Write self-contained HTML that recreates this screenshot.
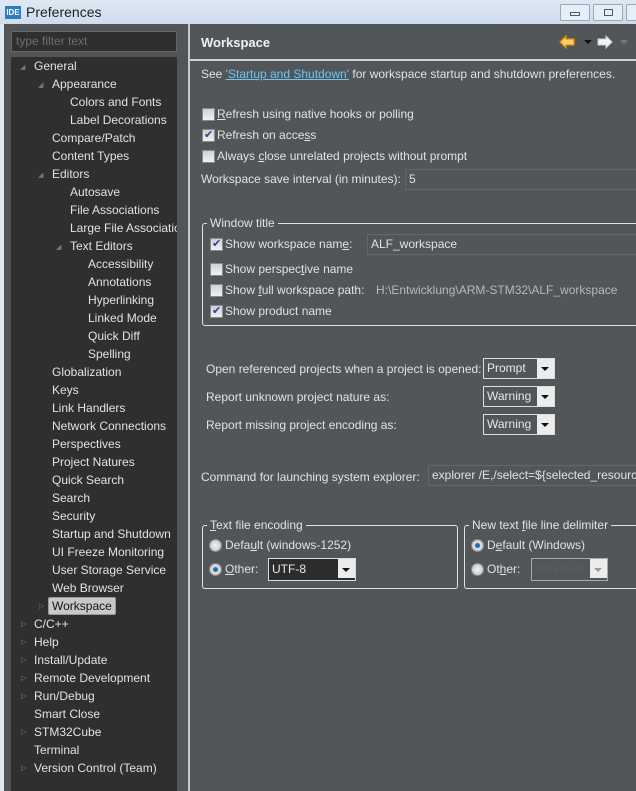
<!DOCTYPE html>
<html><head><meta charset="utf-8"><style>
*{margin:0;padding:0;box-sizing:border-box}
body{width:636px;height:791px;overflow:hidden;background:#dde8f4;font-family:"Liberation Sans",sans-serif;font-size:12px;color:#e2e2e2;position:relative}
.a{position:absolute;white-space:nowrap}
.tb{left:0;top:0;width:636px;height:24px;background:linear-gradient(#dfe9f5,#cfdcec)}
.left{left:4px;top:24px;width:184px;height:767px;background:#505558}
.tree{left:11px;top:57px;width:166px;height:734px;background:#2f2f2f;overflow:hidden}
.right{left:190px;top:24px;width:446px;height:767px;background:#515659}
.t{position:absolute;white-space:nowrap;color:#e2e2e2}
.arr{position:absolute;color:#777;font-size:7px}
.cb{position:absolute;width:13px;height:13px;background:linear-gradient(#d0d0d0,#f2f2f2);border:1px solid #8a8a8a}
.cb.on::after{content:"✔";position:absolute;left:1px;top:-2px;font-size:11px;color:#2a3f9a}
.rb{position:absolute;width:13px;height:13px;border-radius:50%;background:radial-gradient(#f4f4f4,#bbb);border:1px solid #888}
.rb.on::after{content:"";position:absolute;left:3px;top:3px;width:5px;height:5px;border-radius:50%;background:#1a6fb0}
.inp{position:absolute;border:1px solid #666;background:#515659;white-space:nowrap;overflow:hidden}
.dd{position:absolute;height:21px;background:#515659;border:1px solid #ddd;color:#e8e8e8;padding:2px 3px;white-space:nowrap}
.dd::after{content:"";position:absolute;right:0;top:0;width:17px;height:19px;background:#ececec}
.dd b{position:absolute;right:5px;top:8px;width:0;height:0;border-left:4px solid transparent;border-right:4px solid transparent;border-top:4px solid #111;z-index:2}
.grp{position:absolute;border:1px solid #e0e0e0;border-radius:3px}
.gl{position:absolute;top:-8px;background:#515659;padding:0 3px;color:#e2e2e2}
u{text-decoration:underline}
</style></head><body>
<div class="a tb"></div>
<div class="a" style="left:5px;top:6px;width:16px;height:13px;background:#2b7bc0;color:#fff;font-size:8px;font-weight:bold;line-height:13px;text-align:center">IDE</div>
<div class="a" style="left:26px;top:4px;color:#222;font-size:14px">Preferences</div>
<div class="a" style="left:560px;top:4px;width:30px;height:17px;border:1px solid #9aa8bb;border-radius:2px;background:#e6eef8"><div style="position:absolute;left:9px;top:7px;width:10px;height:4px;border:1px solid #556"></div></div>
<div class="a" style="left:593px;top:4px;width:30px;height:17px;border:1px solid #9aa8bb;border-radius:2px;background:#e6eef8"><div style="position:absolute;left:10px;top:4px;width:9px;height:7px;border:1px solid #556"></div></div>
<div class="a" style="left:626px;top:4px;width:14px;height:17px;border:1px solid #9aa8bb;border-radius:2px;background:#e6eef8"></div>
<div class="a left"></div>
<div class="a" style="left:11px;top:31px;width:166px;height:21px;background:#2f2f2f;border:1px solid #666;color:#6e6e6e;padding:2px 4px;font-size:12px">type filter text</div>
<div class="a tree">
<span class="arr" style="left:9px;top:6px">◢</span><span class="t" style="left:23px;top:2px">General</span>
<span class="arr" style="left:27px;top:24px">◢</span><span class="t" style="left:41px;top:20px">Appearance</span>
<span class="t" style="left:59px;top:38px">Colors and Fonts</span>
<span class="t" style="left:59px;top:56px">Label Decorations</span>
<span class="t" style="left:41px;top:74px">Compare/Patch</span>
<span class="t" style="left:41px;top:92px">Content Types</span>
<span class="arr" style="left:27px;top:114px">◢</span><span class="t" style="left:41px;top:110px">Editors</span>
<span class="t" style="left:59px;top:128px">Autosave</span>
<span class="t" style="left:59px;top:146px">File Associations</span>
<span class="t" style="left:59px;top:164px">Large File Associations</span>
<span class="arr" style="left:45px;top:186px">◢</span><span class="t" style="left:59px;top:182px">Text Editors</span>
<span class="t" style="left:77px;top:200px">Accessibility</span>
<span class="t" style="left:77px;top:218px">Annotations</span>
<span class="t" style="left:77px;top:236px">Hyperlinking</span>
<span class="t" style="left:77px;top:254px">Linked Mode</span>
<span class="t" style="left:77px;top:272px">Quick Diff</span>
<span class="t" style="left:77px;top:290px">Spelling</span>
<span class="t" style="left:41px;top:308px">Globalization</span>
<span class="t" style="left:41px;top:326px">Keys</span>
<span class="t" style="left:41px;top:344px">Link Handlers</span>
<span class="t" style="left:41px;top:362px">Network Connections</span>
<span class="t" style="left:41px;top:380px">Perspectives</span>
<span class="t" style="left:41px;top:398px">Project Natures</span>
<span class="t" style="left:41px;top:416px">Quick Search</span>
<span class="t" style="left:41px;top:434px">Search</span>
<span class="t" style="left:41px;top:452px">Security</span>
<span class="t" style="left:41px;top:470px">Startup and Shutdown</span>
<span class="t" style="left:41px;top:488px">UI Freeze Monitoring</span>
<span class="t" style="left:41px;top:506px">User Storage Service</span>
<span class="t" style="left:41px;top:524px">Web Browser</span>
<span class="arr" style="left:28px;top:545px">▷</span><span class="t" style="left:37px;top:540px;background:#c8c8c8;color:#111;border:1px solid #999;border-radius:2px;padding:1px 3px">Workspace</span>
<span class="arr" style="left:10px;top:563px">▷</span><span class="t" style="left:23px;top:560px">C/C++</span>
<span class="arr" style="left:10px;top:581px">▷</span><span class="t" style="left:23px;top:578px">Help</span>
<span class="arr" style="left:10px;top:599px">▷</span><span class="t" style="left:23px;top:596px">Install/Update</span>
<span class="arr" style="left:10px;top:617px">▷</span><span class="t" style="left:23px;top:614px">Remote Development</span>
<span class="arr" style="left:10px;top:635px">▷</span><span class="t" style="left:23px;top:632px">Run/Debug</span>
<span class="t" style="left:23px;top:650px">Smart Close</span>
<span class="arr" style="left:10px;top:671px">▷</span><span class="t" style="left:23px;top:668px">STM32Cube</span>
<span class="t" style="left:23px;top:686px">Terminal</span>
<span class="arr" style="left:10px;top:707px">▷</span><span class="t" style="left:23px;top:704px">Version Control (Team)</span>
</div>
<div class="a" style="left:188px;top:24px;width:2px;height:767px;background:#c8c8c8"></div>
<div class="a right"></div>
<div class="a" style="left:201px;top:35px;font-weight:bold;font-size:13px;color:#f0f0f0">Workspace</div>
<svg class="a" style="left:559px;top:35px" width="16" height="14" viewBox="0 0 16 14"><path d="M1 7 L7 1 L7 4 L15 4 L15 10 L7 10 L7 13 Z" fill="#ffd070" stroke="#e08a00" stroke-width="1.3"/></svg>
<div class="a" style="left:584px;top:40px;width:0;height:0;border-left:4px solid transparent;border-right:4px solid transparent;border-top:4px solid #111"></div>
<svg class="a" style="left:597px;top:35px" width="16" height="14" viewBox="0 0 16 14"><path d="M15 7 L9 1 L9 4 L1 4 L1 10 L9 10 L9 13 Z" fill="#f4f4f4" stroke="#ccc" stroke-width="1"/></svg>
<div class="a" style="left:620px;top:40px;width:0;height:0;border-left:4px solid transparent;border-right:4px solid transparent;border-top:4px solid #777"></div>
<div class="a" style="left:190px;top:59px;width:446px;height:2px;background:#d0d0d0"></div>
<div class="a" style="left:201px;top:67px">See <u style="color:#6cc4f0">'Startup and Shutdown'</u> for workspace startup and shutdown preferences.</div>
<div class="cb" style="left:202px;top:108px"></div><div class="a" style="left:217px;top:107px"><u>R</u>efresh using native hooks or polling</div>
<div class="cb on" style="left:202px;top:129px"></div><div class="a" style="left:217px;top:128px">Refresh on acce<u>s</u>s</div>
<div class="cb" style="left:202px;top:150px"></div><div class="a" style="left:217px;top:149px">Always <u>c</u>lose unrelated projects without prompt</div>
<div class="a" style="left:201px;top:172px">Workspace save interval (in minutes):</div>
<div class="inp" style="left:405px;top:169px;width:235px;height:21px;padding:2px 3px">5</div>
<div class="grp" style="left:202px;top:223px;width:450px;height:103px"><span class="gl" style="left:4px">Window title</span></div>
<div class="cb on" style="left:210px;top:238px"></div><div class="a" style="left:225px;top:237px">Show workspace nam<u>e</u>:</div>
<div class="inp" style="left:367px;top:234px;width:275px;height:21px;padding:2px 3px">ALF_workspace</div>
<div class="cb" style="left:210px;top:263px"></div><div class="a" style="left:225px;top:262px">Show perspec<u>t</u>ive name</div>
<div class="cb" style="left:210px;top:284px"></div><div class="a" style="left:225px;top:283px">Show <u>f</u>ull workspace path:</div>
<div class="a" style="left:376px;top:283px;color:#b8b8b8">H:\Entwicklung\ARM-STM32\ALF_workspace</div>
<div class="cb on" style="left:210px;top:305px"></div><div class="a" style="left:225px;top:304px">Show product name</div>
<div class="a" style="left:206px;top:362px">Open referenced projects when a project is opened:</div>
<div class="dd" style="left:483px;top:358px;width:72px">Prompt<b></b></div>
<div class="a" style="left:206px;top:390px">Report unknown project nature as:</div>
<div class="dd" style="left:483px;top:386px;width:72px">Warning<b></b></div>
<div class="a" style="left:206px;top:418px">Report missing project encoding as:</div>
<div class="dd" style="left:483px;top:414px;width:72px">Warning<b></b></div>
<div class="a" style="left:201px;top:470px">Command for launching system explorer:</div>
<div class="inp" style="left:428px;top:465px;width:215px;height:21px;padding:2px 3px">explorer /E,/select=${selected_resource_loc}</div>
<div class="grp" style="left:202px;top:525px;width:256px;height:64px"><span class="gl" style="left:4px"><u>T</u>ext file encoding</span></div>
<div class="rb" style="left:209px;top:539px"></div><div class="a" style="left:225px;top:538px">Defa<u>u</u>lt (windows-1252)</div>
<div class="rb on" style="left:209px;top:563px"></div><div class="a" style="left:225px;top:562px"><u>O</u>ther:</div>
<div class="dd" style="left:268px;top:558px;width:88px;height:23px;background:#2c2c2c;padding-top:3px">UTF-8<b style="top:9px"></b></div>
<div class="grp" style="left:464px;top:525px;width:190px;height:64px"><span class="gl" style="left:4px">New text <u>f</u>ile line delimiter</span></div>
<div class="rb on" style="left:471px;top:539px"></div><div class="a" style="left:487px;top:538px">D<u>e</u>fault (Windows)</div>
<div class="rb" style="left:471px;top:563px"></div><div class="a" style="left:487px;top:562px">Ot<u>h</u>er:</div>
<div class="dd" style="left:531px;top:558px;width:77px;height:23px;color:#5a5e60;border-color:#aaa;padding-top:3px">Windows<b style="top:9px;border-top-color:#999"></b></div>
</body></html>
